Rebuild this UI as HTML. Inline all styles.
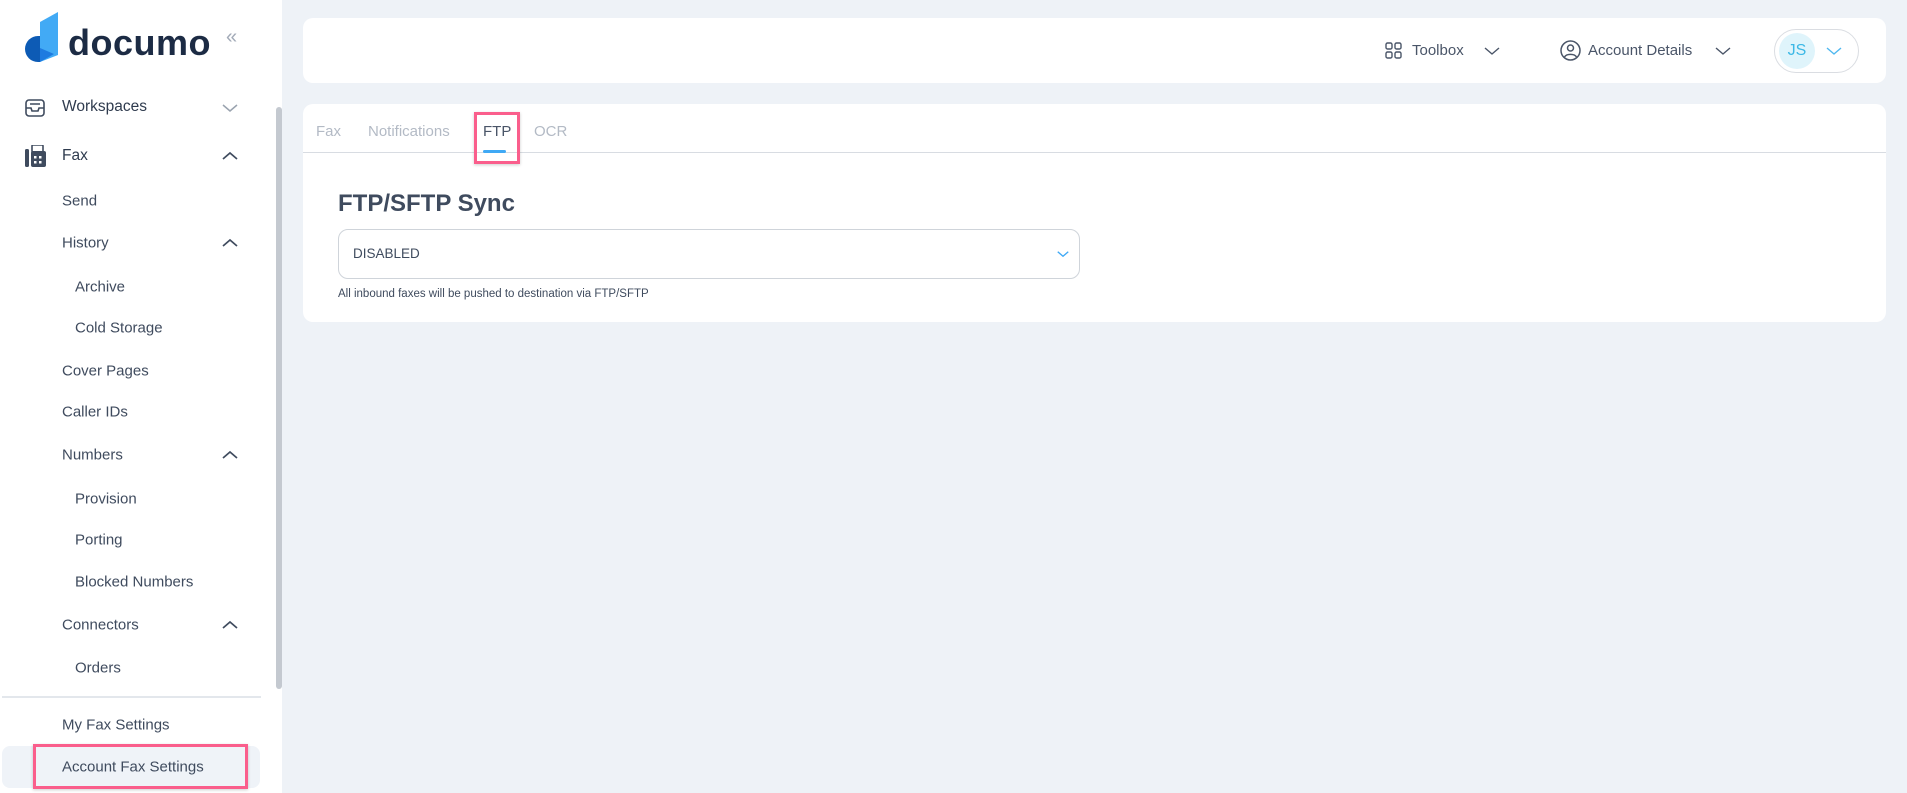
<!DOCTYPE html>
<html><head><meta charset="utf-8"><style>
*{box-sizing:border-box;margin:0;padding:0}
body{width:1907px;height:793px;background:#eef2f7;font-family:"Liberation Sans",sans-serif;color:#3f4b5e;position:relative;overflow:hidden}
.a{position:absolute;white-space:nowrap}
#side{position:absolute;left:0;top:0;width:282px;height:793px;background:#fff}
.nav{font-size:15px;color:#3f4b5e;transform:translateY(-50%)}
.chev{position:absolute;width:16px;height:10px}
</style></head><body>
<div id="side">
 <svg class="a" style="left:22px;top:12px" width="42" height="50" viewBox="0 0 42 50">
  <path d="M18 24h-2a13 13 0 0 0 0 26h2z" fill="#0d5bb5"/>
  <path d="M18 10l18-10v43l-18 7z" fill="#42aaf5"/>
  <path d="M18 36l14 6-14 8z" fill="#1e7be0"/>
 </svg>
 <div class="a" style="left:68px;top:22px;font-size:36px;font-weight:bold;color:#1c2b44;letter-spacing:0.5px">documo</div>
 <div class="a" style="left:226px;top:26px;font-size:20px;color:#a3abb8">«</div>
 <div style="position:absolute;left:276px;top:107px;width:6px;height:582px;background:#c4c9d0;border-radius:3px"></div>
 <svg class="a" style="left:24px;top:98px" width="22" height="20" viewBox="0 0 22 20" fill="none" stroke="#3f4b5e" stroke-width="1.6"><rect x="2" y="2" width="18" height="16" rx="3"/><path d="M2 10h5l1 3h6l1-3h5M6 6h10"/></svg>
 <div class="a nav" style="left:62px;top:107px;color:#2f3b4e;font-size:15.5px">Workspaces</div>
 <svg class="chev" style="left:222px;top:103px" viewBox="0 0 16 10"><path d="M1 2l7 6 7-6" fill="none" stroke="#9aa3af" stroke-width="1.5"/></svg>
 <svg class="a" style="left:25px;top:145px" width="21" height="22" viewBox="0 0 21 22"><rect x="0" y="4" width="4" height="18" rx="1.5" fill="#3f4b5e"/><rect x="6" y="6" width="15" height="16" rx="2" fill="#3f4b5e"/><rect x="7" y="0" width="11" height="7" rx="1" fill="none" stroke="#3f4b5e" stroke-width="1.6"/><g fill="#fff"><rect x="9" y="11" width="2.5" height="2.5"/><rect x="14" y="11" width="2.5" height="2.5"/><rect x="9" y="16" width="2.5" height="2.5"/><rect x="14" y="16" width="2.5" height="2.5"/></g></svg>
 <div class="a nav" style="left:62px;top:156px;color:#2f3b4e;font-size:15.5px">Fax</div>
 <svg class="chev" style="left:222px;top:151px" viewBox="0 0 16 10"><path d="M1 8l7-6 7 6" fill="none" stroke="#3f4b5e" stroke-width="1.7"/></svg>
 <div class="a nav" style="left:62px;top:201px">Send</div>
 <div class="a nav" style="left:62px;top:243px">History</div>
 <svg class="chev" style="left:222px;top:238px" viewBox="0 0 16 10"><path d="M1 8l7-6 7 6" fill="none" stroke="#3f4b5e" stroke-width="1.7"/></svg>
 <div class="a nav" style="left:75px;top:287px">Archive</div>
 <div class="a nav" style="left:75px;top:328px">Cold Storage</div>
 <div class="a nav" style="left:62px;top:371px">Cover Pages</div>
 <div class="a nav" style="left:62px;top:412px">Caller IDs</div>
 <div class="a nav" style="left:62px;top:455px">Numbers</div>
 <svg class="chev" style="left:222px;top:450px" viewBox="0 0 16 10"><path d="M1 8l7-6 7 6" fill="none" stroke="#3f4b5e" stroke-width="1.7"/></svg>
 <div class="a nav" style="left:75px;top:499px">Provision</div>
 <div class="a nav" style="left:75px;top:540px">Porting</div>
 <div class="a nav" style="left:75px;top:582px">Blocked Numbers</div>
 <div class="a nav" style="left:62px;top:625px">Connectors</div>
 <svg class="chev" style="left:222px;top:620px" viewBox="0 0 16 10"><path d="M1 8l7-6 7 6" fill="none" stroke="#3f4b5e" stroke-width="1.7"/></svg>
 <div class="a nav" style="left:75px;top:668px">Orders</div>
 <div style="position:absolute;left:2px;top:696px;width:259px;height:2px;background:#e3e7ec"></div>
 <div class="a nav" style="left:62px;top:725px">My Fax Settings</div>
 <div style="position:absolute;left:2px;top:746px;width:258px;height:42px;background:#eff3f8;border-radius:8px"></div>
 <div style="position:absolute;left:33px;top:744px;width:215px;height:45px;border:3px solid #fa5e8c;box-shadow:0 1px 3px rgba(0,0,0,.2)"></div>
 <div class="a nav" style="left:62px;top:767px">Account Fax Settings</div>
</div>

<div style="position:absolute;left:303px;top:18px;width:1583px;height:65px;background:#fff;border-radius:10px"></div>
<svg class="a" style="left:1385px;top:42px" width="17" height="17" viewBox="0 0 17 17" fill="none" stroke="#4a5568" stroke-width="1.4"><rect x="1" y="1" width="6" height="6" rx="1.5"/><rect x="10" y="1" width="6" height="6" rx="1.5"/><rect x="1" y="10" width="6" height="6" rx="1.5"/><rect x="10" y="10" width="6" height="6" rx="1.5"/></svg>
<div class="a" style="left:1412px;top:42px;font-size:15px;color:#4a5568">Toolbox</div>
<svg class="chev" style="left:1484px;top:46px" viewBox="0 0 16 10"><path d="M1 2l7 6 7-6" fill="none" stroke="#4a5568" stroke-width="1.4"/></svg>
<svg class="a" style="left:1560px;top:40px" width="21" height="21" viewBox="0 0 21 21" fill="none" stroke="#4a5568" stroke-width="1.5"><circle cx="10.5" cy="10.5" r="9.5"/><circle cx="10.5" cy="8" r="3"/><path d="M4.5 17c2-3.5 10-3.5 12 0"/></svg>
<div class="a" style="left:1588px;top:42px;font-size:15px;color:#4a5568">Account Details</div>
<svg class="chev" style="left:1715px;top:46px" viewBox="0 0 16 10"><path d="M1 2l7 6 7-6" fill="none" stroke="#4a5568" stroke-width="1.4"/></svg>
<div style="position:absolute;left:1774px;top:29px;width:85px;height:44px;border:1.5px solid #dadde2;border-radius:22px"></div>
<div style="position:absolute;left:1779px;top:33px;width:36px;height:36px;border-radius:50%;background:#dff4fb;color:#3bb8e6;font-size:16px;text-align:center;line-height:36px">JS</div>
<svg class="chev" style="left:1826px;top:46px" viewBox="0 0 16 10"><path d="M1 2l7 6 7-6" fill="none" stroke="#4fb8f0" stroke-width="1.4"/></svg>

<div style="position:absolute;left:303px;top:104px;width:1583px;height:218px;background:#fff;border-radius:10px"></div>
<div style="position:absolute;left:303px;top:152px;width:1583px;height:1px;background:#d8dce2"></div>
<div class="a" style="left:316px;top:123px;font-size:15px;color:#b3bac5">Fax</div>
<div class="a" style="left:368px;top:123px;font-size:15px;color:#b3bac5">Notifications</div>
<div class="a" style="left:483px;top:123px;font-size:15px;color:#4a5568">FTP</div>
<div class="a" style="left:534px;top:123px;font-size:15px;color:#b3bac5">OCR</div>
<div style="position:absolute;left:483px;top:150px;width:23px;height:3px;background:#3fa9f5;border-radius:2px"></div>
<div style="position:absolute;left:474px;top:112px;width:46px;height:52px;border:3px solid #fa5e8c;box-shadow:0 1px 3px rgba(0,0,0,.2)"></div>
<div class="a" style="left:338px;top:190px;font-size:24px;font-weight:bold;color:#3f4b5e">FTP/SFTP Sync</div>
<div style="position:absolute;left:338px;top:229px;width:742px;height:50px;border:1px solid #cfd4da;border-radius:10px"></div>
<div class="a" style="left:353px;top:246px;font-size:13.5px;color:#3f4b5e">DISABLED</div>
<svg class="chev" style="left:1057px;top:250px;width:12px;height:8px" viewBox="0 0 16 10"><path d="M1 2l7 6 7-6" fill="none" stroke="#3fa9f5" stroke-width="1.8"/></svg>
<div class="a" style="left:338px;top:288px;font-size:11.5px;color:#3f4b5e">All inbound faxes will be pushed to destination via FTP/SFTP</div>
</body></html>
